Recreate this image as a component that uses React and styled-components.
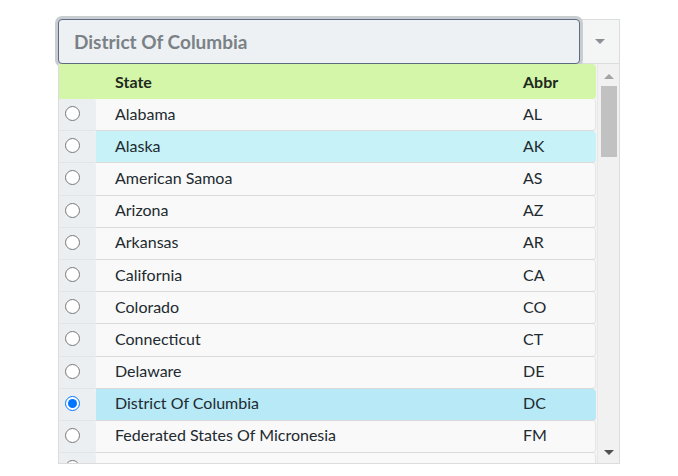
import React, { useState } from "react";
import styled, { createGlobalStyle } from "styled-components";

const Global = createGlobalStyle`
  html, body { margin: 0; padding: 0; background: #ffffff; }
  body { font-family: Lato, "Open Sans", "Liberation Sans", sans-serif; }
  * { box-sizing: border-box; }
`;

const Page = styled.div`
  padding: 19px 0 0 58px;
  width: 678px;
  height: 476px;
  overflow: hidden;
`;

const Widget = styled.div`
  width: 562px;
  display: flex;
  flex-direction: column;
`;

const Combo = styled.div`
  display: flex;
  height: 45px;
`;

const Input = styled.input`
  width: 522px;
  height: 45px;
  border: 1px solid #5c6c7c;
  border-radius: 4px;
  box-shadow: 0 0 0 3px #c8cdd2;
  background: #eef1f3;
  color: #7a8287;
  font-family: Lato, "Open Sans", sans-serif;
  font-weight: 700;
  font-size: 19px;
  padding: 0 0 0 15px;
  outline: none;
  position: relative;
  z-index: 1;
`;

const DropButton = styled.div`
  width: 40px;
  height: 45px;
  background: #f4f5f5;
  border: 1px solid #dcdcdc;
  border-left: none;
  display: flex;
  align-items: center;
  justify-content: center;
`;

const Caret = styled.span`
  width: 0;
  height: 0;
  border-left: 5px solid transparent;
  border-right: 5px solid transparent;
  border-${(p) => (p.$up ? "bottom" : "top")}: 5px solid ${(p) => p.$color || "#8a8f93"};
`;

const List = styled.div`
  position: relative;
  z-index: 2;
  height: 400px;
  border: 1px solid #dcdcdc;
  border-top: none;
  background: #f3f3f3;
  display: flex;
  overflow: hidden;
`;

const Rows = styled.div`
  width: 538px;
  display: flex;
  flex-direction: column;
  overflow: hidden;
`;

const Header = styled.div`
  flex: none;
  height: 35px;
  background: #d3f6a8;
  border-radius: 0 4px 4px 0;
  display: grid;
  grid-template-columns: 37px 427px 1fr;
  align-items: center;
  font-weight: 700;
  font-size: 16px;
  color: #1e2a1e;
  padding-bottom: 1px;
`;

const HeadCell = styled.div`
  padding-left: ${(p) => p.$pad || 0}px;
`;

const Row = styled.div`
  flex: none;
  height: 32.2px;
  display: grid;
  grid-template-columns: 37px 1fr;
`;

const RadioCell = styled.div`
  background: #eceff1;
  border-bottom: 1px solid #e2e4e6;
  border-radius: 0 4px 0 0;
  display: flex;
  align-items: center;
  padding: 0 0 2px 6px;
`;

const Radio = styled.input`
  margin: 0;
  width: 15px;
  height: 15px;
`;

const Cell = styled.div`
  background: ${(p) => (p.$state === "selected" ? "#b7e9f7" : p.$state === "hover" ? "#c6f2f8" : "#f9f9f9")};
  border-bottom: 1px solid #dadada;
  border-right: 1px solid ${(p) => (p.$state ? "transparent" : "#e4e4e4")};
  border-radius: 0 4px 4px 0;
  display: grid;
  grid-template-columns: 408px 1fr;
  align-items: center;
  padding: 0 0 3px 19px;
  font-size: 16px;
  color: #222a30;
  white-space: nowrap;
`;

const Scrollbar = styled.div`
  width: 22px;
  margin-left: 1px;
  background: #f1f1f1;
  border-left: 1px solid #e8e8e8;
  display: flex;
  flex-direction: column;
  align-items: center;
  padding: 0 2px 0 3px;
`;

const ArrowBox = styled.div`
  height: 22px;
  width: 100%;
  display: flex;
  align-items: center;
  justify-content: center;
  padding-top: ${(p) => (p.$up ? 2 : 0)}px;
`;

const Thumb = styled.div`
  width: 100%;
  height: 71px;
  background: #c1c1c1;
`;

const Track = styled.div`
  flex: 1;
`;

const states = [
  ["Alabama", "AL"],
  ["Alaska", "AK"],
  ["American Samoa", "AS"],
  ["Arizona", "AZ"],
  ["Arkansas", "AR"],
  ["California", "CA"],
  ["Colorado", "CO"],
  ["Connecticut", "CT"],
  ["Delaware", "DE"],
  ["District Of Columbia", "DC"],
  ["Federated States Of Micronesia", "FM"],
  ["Florida", "FL"],
  ["Georgia", "GA"],
];

export default function App() {
  const [selected, setSelected] = useState("DC");
  const name = states.find((s) => s[1] === selected)?.[0] || "";
  return (
    <Page>
      <Global />
      <Widget>
        <Combo>
          <Input value={name} readOnly />
          <DropButton>
            <Caret />
          </DropButton>
        </Combo>
        <List>
          <Rows>
            <Header>
              <HeadCell />
              <HeadCell $pad={19}>State</HeadCell>
              <HeadCell>Abbr</HeadCell>
            </Header>
            {states.map(([n, a]) => {
              const st = a === selected ? "selected" : a === "AK" ? "hover" : undefined;
              return (
                <Row key={a} onClick={() => setSelected(a)}>
                  <RadioCell>
                    <Radio type="radio" name="state" checked={a === selected} readOnly />
                  </RadioCell>
                  <Cell $state={st}>
                    <span>{n}</span>
                    <span>{a}</span>
                  </Cell>
                </Row>
              );
            })}
          </Rows>
          <Scrollbar>
            <ArrowBox $up>
              <Caret $up $color="#a3a3a3" />
            </ArrowBox>
            <Thumb />
            <Track />
            <ArrowBox>
              <Caret $color="#505050" />
            </ArrowBox>
          </Scrollbar>
        </List>
      </Widget>
    </Page>
  );
}
